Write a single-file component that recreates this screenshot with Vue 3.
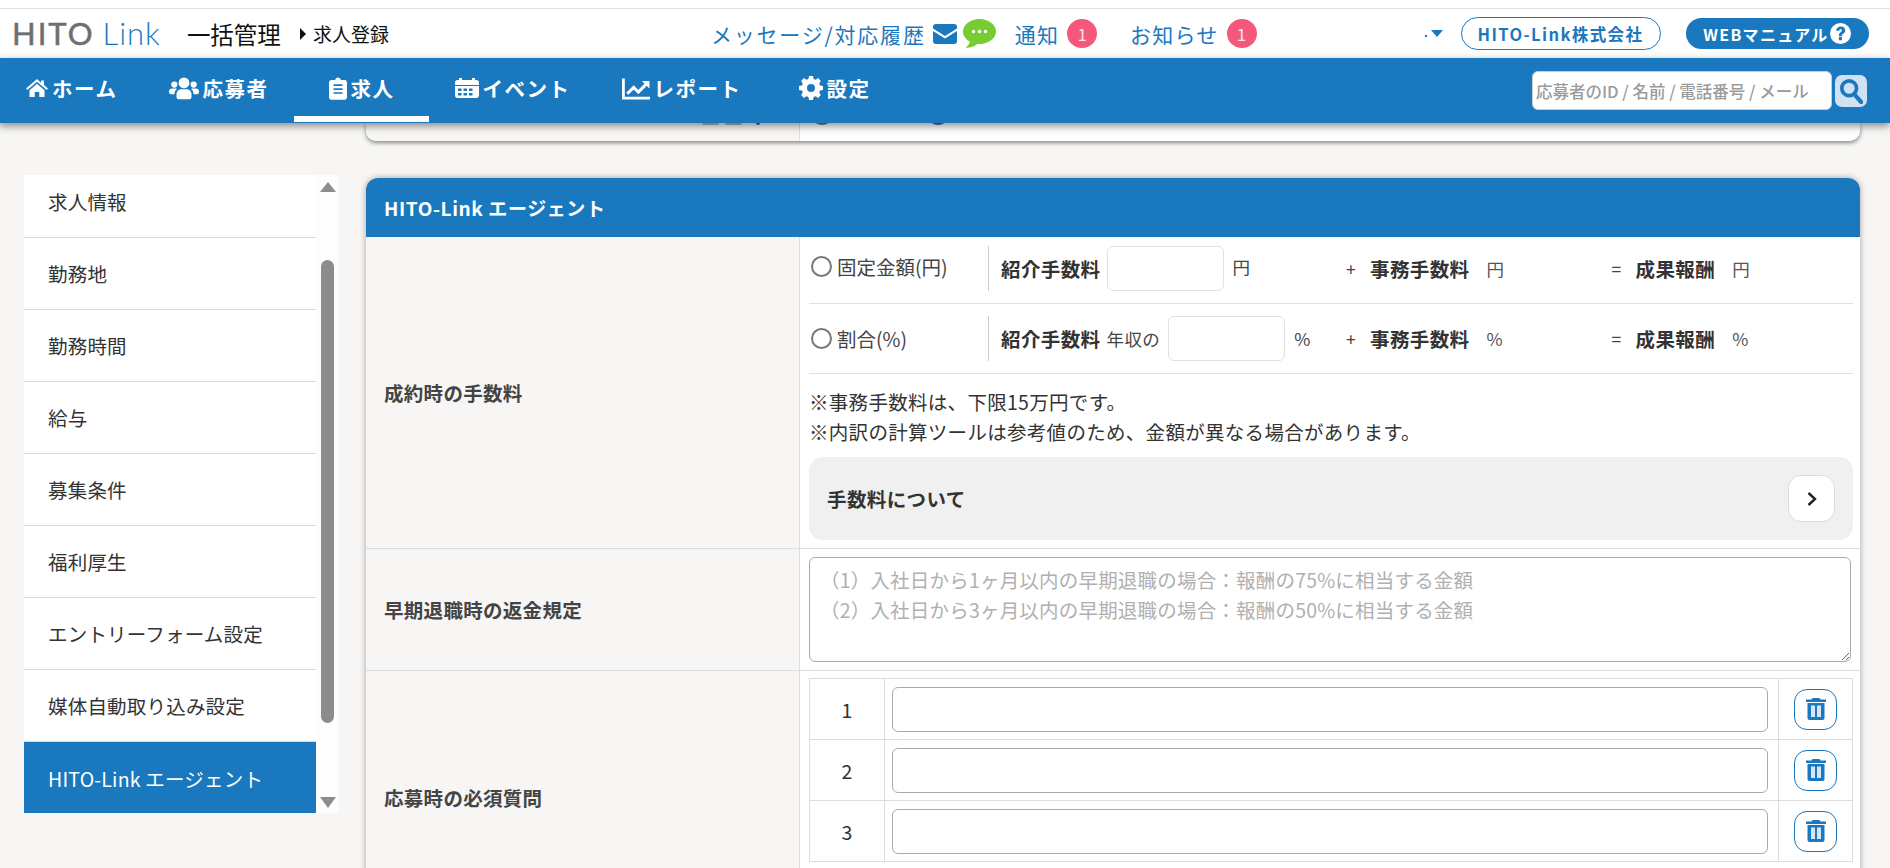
<template>
  <div class="page">
    <header class="header">
      <div class="topline"></div>
      <div class="topbar">
        <div class="logo"><span class="logo-hito">HITO</span><span class="logo-link">Link</span></div>
        <div class="page-title">一括管理</div>
        <span class="crumb-arrow"></span>
        <div class="crumb">求人登録</div>

        <a class="msg-link">メッセージ/対応履歴</a>
        <svg class="mail" viewBox="0 0 24 20">
          <path d="M3 0h18a3 3 0 0 1 3 3v1.500L12 12 0 4.500V3a3 3 0 0 1 3-3z" fill="#1a78be" />
          <path d="M0 7l12 7.500L24 7v10a3 3 0 0 1-3 3H3a3 3 0 0 1-3-3z" fill="#1a78be" />
        </svg>
        <svg class="chat" viewBox="0 0 33 29">
          <path d="M16.500 0C7.400 0 0 5.600 0 12.500c0 4.200 2.700 7.900 6.900 10.100C6.500 25 4.800 27.200 2.600 28.600c4.600.3 9-1.400 11.700-3.700.7.100 1.500.1 2.200.1C25.600 25 33 19.400 33 12.500S25.600 0 16.500 0z" fill="#76cc30" />
          <circle cx="10.500" cy="12.500" r="1.700" fill="#fff" />
          <circle cx="16.500" cy="12.500" r="1.700" fill="#fff" />
          <circle cx="22.500" cy="12.500" r="1.700" fill="#fff" />
        </svg>
        <a class="notice first">通知</a>
        <span class="badge">1</span>
        <a class="notice second">お知らせ</a>
        <span class="badge">1</span>

        <span class="user-dot"></span>
        <span class="user-caret"></span>
        <div class="company">HITO-Link株式会社</div>
        <div class="manual">
          WEBマニュアル
          <svg class="help" viewBox="0 0 20 20">
            <circle cx="10" cy="10" r="10" fill="#fff" />
            <path d="M5.800 7.400C6 5 7.800 3.400 10.200 3.400c2.500 0 4.300 1.500 4.300 3.700 0 1.600-.9 2.500-2 3.200-.9.600-1.100.9-1.100 1.700v.6H8.500v-.8c0-1.500.5-2.300 1.600-3.100.8-.6 1.200-1 1.200-1.600 0-.8-.5-1.200-1.200-1.200-.8 0-1.300.6-1.400 1.500z" fill="#1a78be" />
            <rect x="8.500" y="13.400" width="2.900" height="3" rx=".5" fill="#1a78be" />
          </svg>
        </div>
      </div>

      <nav class="nav">
        <a v-for="item in navItems" :key="item.label" class="nav-item" :class="{ active: item.active }">
          <svg class="nav-icon" :class="item.key" :viewBox="item.box">
            <g v-if="item.key === 'home'" fill="#fff">
              <path d="M12 1 1 10.500l1.400 1.600L12 3.800l9.600 8.300 1.400-1.600-4-3.400V2.500h-3v2.200z" />
              <path d="M12 5.800 4.500 12.200V19h5.200v-5h4.600v5h5.200v-6.800z" />
            </g>
            <g v-else-if="item.key === 'users'" fill="#fff">
              <circle cx="12" cy="5.500" r="4.300" />
              <circle cx="4.300" cy="6.800" r="2.500" />
              <circle cx="19.700" cy="6.800" r="2.500" />
              <path d="M6 17v-2.500C6 12 8 10.500 9.800 10.500h4.400c1.800 0 3.800 1.500 3.800 4V17c0 .8-.7 1.500-1.500 1.500h-9C6.700 18.500 6 17.800 6 17z" />
              <path d="M0 12.500C0 10.800 1 10 2.500 10H5c.5 0 1 .1 1.300.4C5 11.400 4.300 13 4.300 14.500H1.500C.7 14.500 0 13.800 0 13zM24 12.500c0-1.700-1-2.500-2.500-2.500H19c-.5 0-1 .1-1.300.4 1.300 1 2 2.600 2 4.100h2.800c.8 0 1.500-.7 1.500-1.500z" />
            </g>
            <g v-else-if="item.key === 'job'">
              <path d="M6 2.500h3.500C9.700 1.200 10.700.3 12 .3s2.300.9 2.500 2.200H18c1.100 0 2 .9 2 2V18c0 1.100-.9 2-2 2H6c-1.100 0-2-.9-2-2V4.500c0-1.100.9-2 2-2z" fill="#fff" />
              <path d="M8 7h8M8 10.500h8M8 14h8" stroke="#1a78be" stroke-width="1.500" />
            </g>
            <g v-else-if="item.key === 'calendar'" fill="#fff">
              <path d="M4 0h3v2h10V0h3v2h1.500C22.900 2 24 3.100 24 4.500V7H0V4.500C0 3.100 1.100 2 2.500 2H4z" />
              <path d="M0 8h24v9.500c0 1.400-1.100 2.500-2.500 2.500h-19C1.100 20 0 18.900 0 17.500zm3 2.500V13h3.500v-2.500zm5.500 0V13H12v-2.500zm5.500 0V13h3.500v-2.500zM3 15v2.500h3.500V15zm5.500 0v2.500H12V15zm5.500 0v2.500h3.500V15z" fill-rule="evenodd" />
            </g>
            <g v-else-if="item.key === 'chart'">
              <path d="M1.200 1v16.800H24" fill="none" stroke="#fff" stroke-width="2.400" />
              <path d="M4.500 14 10 8.500l4 4L21 5.500" fill="none" stroke="#fff" stroke-width="2.600" />
              <path d="M17 3h6.500v6.500z" fill="#fff" />
            </g>
            <g v-else fill="#fff">
              <path d="M10 0h4l.6 3 2 .8 2.500-1.700 2.800 2.800-1.700 2.500.8 2 3 .6v4l-3 .6-.8 2 1.700 2.500-2.800 2.800-2.500-1.700-2 .8-.6 3h-4l-.6-3-2-.8-2.500 1.700-2.800-2.800 1.700-2.500-.8-2-3-.6v-4l3-.6.8-2L2.100 4.900l2.800-2.800 2.500 1.700 2-.8zm2 8a4 4 0 1 0 0 8 4 4 0 0 0 0-8z" fill-rule="evenodd" />
            </g>
          </svg>
          <span>{{ item.label }}</span>
        </a>
        <div class="search">
          <input class="search-input" placeholder="応募者のID / 名前 / 電話番号 / メール" />
          <button class="search-btn">
            <svg viewBox="0 0 26 28" width="26" height="28">
              <circle cx="11" cy="11" r="8" fill="none" stroke="#1a78be" stroke-width="4" />
              <path d="M16.500 17.500 24 26" stroke="#1a78be" stroke-width="4.500" stroke-linecap="round" />
            </svg>
          </button>
        </div>
      </nav>
    </header>

    <main class="main">
      <aside class="side">
        <div class="menu">
          <ul class="menu-list">
            <li v-for="m in menuItems" :key="m" class="menu-item" :class="{ active: m === activeMenu }">{{ m }}</li>
          </ul>
        </div>
        <div class="scroll">
          <span class="arrow up"></span>
          <span class="thumb"></span>
          <span class="arrow down"></span>
        </div>
      </aside>

      <div class="content">
        <section class="stub">
          <div class="stub-left">
            <i class="bit gray"></i><i class="bit gray"></i><i class="bit blue"></i>
          </div>
          <div class="stub-right">
            <i class="stub-radio"></i><i class="stub-radio blue-ring"></i>
          </div>
        </section>

        <section class="card">
          <h2 class="card-head">HITO-Link エージェント</h2>

          <div class="row">
            <div class="label">成約時の手数料</div>
            <div class="value fee">
              <div class="fee-line">
                <label class="fee-type"><i class="radio"></i>固定金額(円)</label>
                <div class="fee-main">
                  <b>紹介手数料</b>
                  <input class="small-input" />
                  <span class="unit">円</span>
                </div>
                <span class="op">+</span><b class="fee-name">事務手数料</b><span class="fee-unit">円</span>
                <span class="op">=</span><b class="fee-name">成果報酬</b><span class="fee-unit last">円</span>
              </div>
              <div class="fee-line">
                <label class="fee-type"><i class="radio"></i>割合(%)</label>
                <div class="fee-main">
                  <b>紹介手数料</b>
                  <span class="income">年収の</span>
                  <input class="small-input" />
                  <span class="unit">%</span>
                </div>
                <span class="op">+</span><b class="fee-name">事務手数料</b><span class="fee-unit">%</span>
                <span class="op">=</span><b class="fee-name">成果報酬</b><span class="fee-unit last">%</span>
              </div>
              <p class="notes">
                ※事務手数料は、下限15万円です。<br />
                ※内訳の計算ツールは参考値のため、金額が異なる場合があります。
              </p>
              <div class="about">
                <b>手数料について</b>
                <button class="about-btn">
                  <svg viewBox="0 0 12 16" width="12" height="16">
                    <path d="M2.500 2 9 8l-6.500 6" fill="none" stroke="#222" stroke-width="2.400" />
                  </svg>
                </button>
              </div>
            </div>
          </div>

          <div class="row">
            <div class="label">早期退職時の返金規定</div>
            <div class="value refund">
              <textarea class="refund-text" :placeholder="refundHint"></textarea>
            </div>
          </div>

          <div class="row last-row">
            <div class="label">応募時の必須質問</div>
            <div class="value questions">
              <div class="q-table">
                <div v-for="n in 3" :key="n" class="q-row">
                  <div class="q-no">{{ n }}</div>
                  <div class="q-input"><input /></div>
                  <div class="q-del">
                    <button class="del-btn">
                      <svg viewBox="0 0 20 22" width="20" height="22">
                        <path d="M6.500 0h7l1 1.500H20v2.500H0V1.500h5.500z" fill="#1a78be" />
                        <path d="M1.500 5h17v15a2 2 0 0 1-2 2h-13a2 2 0 0 1-2-2z" fill="#1a78be" />
                        <rect x="5" y="7.500" width="4" height="11.500" fill="#d6e7f4" />
                        <rect x="11" y="7.500" width="4" height="11.500" fill="#d6e7f4" />
                      </svg>
                    </button>
                  </div>
                </div>
              </div>
            </div>
          </div>
        </section>
      </div>
    </main>
  </div>
</template>

<script setup>
const navItems = [
  { key: 'home', label: 'ホーム', box: '0 0 24 20' },
  { key: 'users', label: '応募者', box: '0 1 24 18' },
  { key: 'job', label: '求人', box: '4 0 16 20', active: true },
  { key: 'calendar', label: 'イベント', box: '0 0 24 20' },
  { key: 'chart', label: 'レポート', box: '0 0 24 19' },
  { key: 'cog', label: '設定', box: '0 0 24 24' }
]

const menuItems = [
  '求人情報',
  '勤務地',
  '勤務時間',
  '給与',
  '募集条件',
  '福利厚生',
  'エントリーフォーム設定',
  '媒体自動取り込み設定',
  'HITO-Link エージェント'
]
const activeMenu = 'HITO-Link エージェント'

const refundHint =
  '（1）入社日から1ヶ月以内の早期退職の場合：報酬の75%に相当する金額\n（2）入社日から3ヶ月以内の早期退職の場合：報酬の50%に相当する金額'
</script>

<style>
html,
body {
  margin: 0;
  height: 868px;
  overflow: hidden;
  background: #f7f6f4;
}
</style>

<style scoped>
.page {
  width: 1890px;
  height: 868px;
  overflow: hidden;
  background: #f7f6f4;
  color: #333;
  font-family: "Noto Sans CJK JP", "Noto Sans", sans-serif;
  font-size: 19.500px;
}

/* header */
.header {
  position: relative;
  z-index: 5;
  background: #fff;
}
.topline {
  height: 8px;
  border-bottom: 1px solid #e3e3e3;
}
.topbar {
  height: 49px;
  display: flex;
  align-items: center;
}
.logo {
  margin-left: 12px;
  display: flex;
  align-items: baseline;
  font-family: Lato, sans-serif;
  font-size: 31px;
  line-height: 1;
}
.logo-hito {
  color: #6e6e6e;
  letter-spacing: 2px;
  -webkit-text-stroke: 0.5px #6e6e6e;
}
.logo-link {
  color: #1a78be;
  margin-left: 8px;
  font-weight: 300;
  letter-spacing: 1px;
}
.page-title {
  margin-left: 26px;
  font-size: 23.500px;
  color: #111;
}
.crumb-arrow {
  margin-left: 19px;
  border-left: 6px solid #111;
  border-top: 6px solid transparent;
  border-bottom: 6px solid transparent;
}
.crumb {
  margin-left: 7px;
  font-size: 19px;
  color: #111;
}
.msg-link {
  margin-left: 322px;
  color: #1a78be;
  font-size: 21px;
  letter-spacing: 1.800px;
}
.mail {
  width: 24px;
  height: 20px;
  margin-left: 7px;
}
.chat {
  width: 33px;
  height: 29px;
  margin-left: 6px;
}
.notice {
  color: #1a78be;
  font-size: 21px;
  letter-spacing: 1.200px;
}
.notice.first {
  margin-left: 19px;
}
.notice.second {
  margin-left: 33px;
}
.badge {
  margin-left: 8px;
  width: 30px;
  height: 29px;
  border-radius: 50%;
  background: #f4587a;
  color: #fbe3e8;
  font-size: 17px;
  display: flex;
  align-items: center;
  justify-content: center;
}
.user-dot {
  margin-left: 168px;
  width: 2px;
  height: 2px;
  margin-top: 5px;
  background: #1a78be;
}
.user-caret {
  margin-left: 4px;
  border-top: 7px solid #1a78be;
  border-left: 6.500px solid transparent;
  border-right: 6.500px solid transparent;
}
.company {
  margin-left: 18px;
  width: 200px;
  height: 33px;
  box-sizing: border-box;
  border: 1px solid #1a78be;
  border-radius: 17px;
  color: #1a78be;
  font-size: 16.500px;
  font-weight: 700;
  letter-spacing: 1.400px;
  display: flex;
  align-items: center;
  justify-content: center;
}
.manual {
  margin-left: 25px;
  width: 183px;
  height: 31px;
  border-radius: 16px;
  background: #1a78be;
  color: #fff;
  font-size: 16px;
  font-weight: 700;
  letter-spacing: 1.300px;
  display: flex;
  align-items: center;
  justify-content: center;
  gap: 1px;
}
.help {
  width: 21px;
  height: 21px;
}

/* nav */
.nav {
  height: 65px;
  background: #1a78be;
  display: flex;
  margin-left: -1px;
  box-shadow: 0 3px 8px rgba(0, 0, 0, 0.45);
}
.nav-item {
  height: 64px;
  min-width: 135px;
  box-sizing: border-box;
  padding: 2px 26px 0;
  border-bottom: 6px solid transparent;
  display: flex;
  align-items: center;
  justify-content: center;
  gap: 3px;
  color: #fff;
  font-size: 20.500px;
  font-weight: 700;
  letter-spacing: 1.500px;
}
.nav-item.active {
  border-bottom-color: #fff;
}
.nav-icon {
  height: 20px;
  width: 24px;
  flex: none;
}
.nav-icon.users {
  width: 30px;
  height: 23px;
}
.nav-icon.job {
  width: 18px;
  height: 23px;
}
.nav-icon.chart {
  width: 28px;
  height: 23px;
}
.nav-icon.cog {
  width: 24px;
  height: 24px;
}
.search {
  margin-left: auto;
  margin-right: 23px;
  display: flex;
  align-items: center;
  gap: 3px;
}
.search-input {
  width: 300px;
  height: 39px;
  box-sizing: border-box;
  padding: 0 3px;
  border: 1px solid #ccc;
  border-radius: 6px;
  background: #fff;
  font-family: inherit;
  font-size: 16.500px;
  font-weight: 500;
}
.search-input::placeholder {
  color: #9a9a9a;
  opacity: 1;
}
.search-btn {
  width: 32px;
  height: 32px;
  padding: 0;
  border: none;
  border-radius: 7px;
  background: #cfe2f2;
  display: flex;
  align-items: center;
  justify-content: center;
}
.search-btn svg {
  width: 24px;
  height: 26px;
}

/* main layout */
.main {
  display: flex;
  align-items: flex-start;
  padding-left: 24px;
  gap: 27px;
}

/* side menu */
.side {
  width: 315px;
  height: 638px;
  margin-top: 52px;
  display: flex;
  background: #fff;
  flex: none;
}
.menu {
  width: 292px;
  height: 638px;
  overflow: hidden;
}
.menu-list {
  list-style: none;
  margin: -9px 0 0;
  padding: 0;
}
.menu-item {
  height: 72px;
  box-sizing: border-box;
  padding-left: 24px;
  border-bottom: 1px solid #d8d8d8;
  display: flex;
  align-items: center;
  color: #333;
  font-size: 19.500px;
  letter-spacing: 0.200px;
}
.menu-item.active {
  background: #1a78be;
  color: #fff;
  border-bottom: none;
}
.scroll {
  width: 23px;
  background: #fdfdfd;
  display: flex;
  flex-direction: column;
  align-items: center;
}
.arrow {
  border-left: 8px solid transparent;
  border-right: 8px solid transparent;
}
.arrow.up {
  margin-top: 7px;
  border-bottom: 10px solid #8c8c8c;
}
.arrow.down {
  margin-top: 74px;
  border-top: 11px solid #8c8c8c;
}
.thumb {
  margin-top: 68px;
  width: 13px;
  height: 463px;
  border-radius: 7px;
  background: #8c8c8c;
}

/* cards */
.content {
  width: 1494px;
  flex: none;
}
.stub {
  height: 18px;
  display: grid;
  grid-template-columns: 434px 1fr;
  overflow: hidden;
  background: #fff;
  border-radius: 0 0 10px 10px;
  box-shadow: 0 2px 4px rgba(0, 0, 0, 0.45);
}
.stub-left {
  background: #f7f6f4;
  border-right: 1px solid #ddd;
  display: flex;
  align-items: flex-start;
  padding-left: 336px;
  gap: 6px;
}
.bit {
  width: 17px;
  height: 2px;
  border-radius: 0 0 3px 3px;
}
.bit.gray {
  background: #b5b5b5;
}
.bit.blue {
  width: 4px;
  margin-left: 8px;
  background: #1a78be;
}
.stub-right {
  display: flex;
  align-items: flex-start;
  padding-left: 11px;
  gap: 94px;
}
.stub-radio {
  margin-top: -20px;
  width: 18px;
  height: 18px;
  border: 2px solid #777;
  border-radius: 50%;
}
.stub-radio.blue-ring {
  border-color: #456f92;
}
.card {
  margin-top: 37px;
  background: #fff;
  border-radius: 12px 12px 0 0;
  box-shadow: 0 0 6px rgba(0, 0, 0, 0.35);
}
.card-head {
  margin: 0;
  height: 59px;
  padding-left: 18px;
  display: flex;
  align-items: center;
  background: #1a78be;
  border-radius: 12px 12px 0 0;
  color: #fff;
  font-size: 19px;
  font-weight: 700;
  letter-spacing: 0.600px;
}
.row {
  display: grid;
  grid-template-columns: 434px 1fr;
  border-bottom: 1px solid #ddd;
}
.label {
  box-sizing: border-box;
  background: #f7f6f4;
  border-right: 1px solid #ddd;
  padding-left: 18px;
  display: flex;
  align-items: center;
  font-weight: 700;
  font-size: 19.500px;
  letter-spacing: 0.300px;
  color: #444;
}
.value {
  box-sizing: border-box;
  padding: 0 7px 0 9px;
}

/* fee rows */
.fee {
  height: 311px;
}
.fee-line {
  display: flex;
  align-items: center;
  height: 70px;
  border-bottom: 1px solid #e0e0e0;
  box-sizing: border-box;
  color: #333;
}
.fee-line:first-child {
  height: 67px;
  padding: 9px 0 12px;
}
.fee-line:first-child .fee-type {
  padding-bottom: 4px;
}
.fee-line:first-child .unit {
  margin-bottom: 4px;
}
.fee-line b {
  font-weight: 700;
  color: #333;
}
.fee-type {
  width: 180px;
  height: 45px;
  box-sizing: border-box;
  flex: none;
  display: flex;
  align-items: center;
  gap: 5px;
  border-right: 1px solid #ccc;
  padding-left: 2px;
  color: #444;
}
.radio {
  width: 17px;
  height: 17px;
  border: 2.500px solid #777;
  border-radius: 50%;
  flex: none;
}
.fee-main {
  width: 357px;
  flex: none;
  padding-left: 12px;
  box-sizing: border-box;
  display: flex;
  align-items: center;
  letter-spacing: 0.400px;
}
.small-input {
  margin-left: 6px;
  width: 117px;
  height: 45px;
  box-sizing: border-box;
  border: 1px solid #e0e0e0;
  border-radius: 6px;
  background: #fff;
}
.unit {
  margin-left: 9px;
  font-size: 17.500px;
  color: #444;
}
.income {
  margin-left: 6px;
  font-size: 17.500px;
  color: #444;
}
.income + .small-input {
  margin-left: 8px;
}
.op {
  width: 24px;
  flex: none;
  font-size: 17.500px;
  color: #444;
}
.fee-name {
  letter-spacing: 0.400px;
  flex: none;
}
.fee-unit {
  margin-left: 17px;
  width: 125px;
  flex: none;
  font-size: 17.500px;
  color: #555;
}
.fee-unit.last {
  width: auto;
}
.notes {
  margin: 13px 0 0;
  line-height: 30px;
  font-size: 19.500px;
  letter-spacing: 0.300px;
  color: #333;
}
.about {
  margin-top: 10px;
  height: 83px;
  padding: 0 18px;
  display: flex;
  align-items: center;
  justify-content: space-between;
  background: #f0f0f0;
  border-radius: 14px;
}
.about b {
  font-weight: 700;
  letter-spacing: 0.400px;
  color: #333;
}
.about-btn {
  width: 47px;
  height: 47px;
  padding: 0;
  border: 1px solid #ddd;
  border-radius: 13px;
  background: #fff;
  display: flex;
  align-items: center;
  justify-content: center;
}

/* refund */
.refund {
  height: 121px;
  padding: 8px 9px 0 9px;
}
.refund-text {
  display: block;
  width: 100%;
  height: 105px;
  box-sizing: border-box;
  padding: 7px 10px;
  border: 1px solid #aaa;
  border-radius: 6px;
  font-family: inherit;
  font-size: 19.500px;
  line-height: 29.500px;
  letter-spacing: 0.200px;
}
.refund-text::placeholder {
  color: #b0b0b0;
  opacity: 1;
}

/* questions */
.last-row {
  border-bottom: none;
}
.questions {
  height: 252px;
  padding-top: 7px;
}
.q-table {
  border: 1px solid #ddd;
}
.q-row {
  display: grid;
  grid-template-columns: 75px 1fr 74px;
  height: 61px;
  box-sizing: border-box;
  border-bottom: 1px solid #ddd;
}
.q-row:last-child {
  height: 60px;
  border-bottom: none;
}
.q-no {
  display: flex;
  align-items: center;
  justify-content: center;
  border-right: 1px solid #ddd;
  color: #333;
}
.q-input {
  display: flex;
  align-items: center;
  padding: 0 10px 0 7px;
}
.q-input input {
  width: 100%;
  height: 45px;
  box-sizing: border-box;
  border: 1px solid #aaa;
  border-radius: 6px;
  background: #fff;
}
.q-del {
  display: flex;
  align-items: center;
  justify-content: center;
  border-left: 1px solid #ddd;
}
.del-btn {
  width: 43px;
  height: 41px;
  padding: 0;
  border: 1px solid #1a78be;
  border-radius: 13px;
  background: #fff;
  display: flex;
  align-items: center;
  justify-content: center;
}
</style>
